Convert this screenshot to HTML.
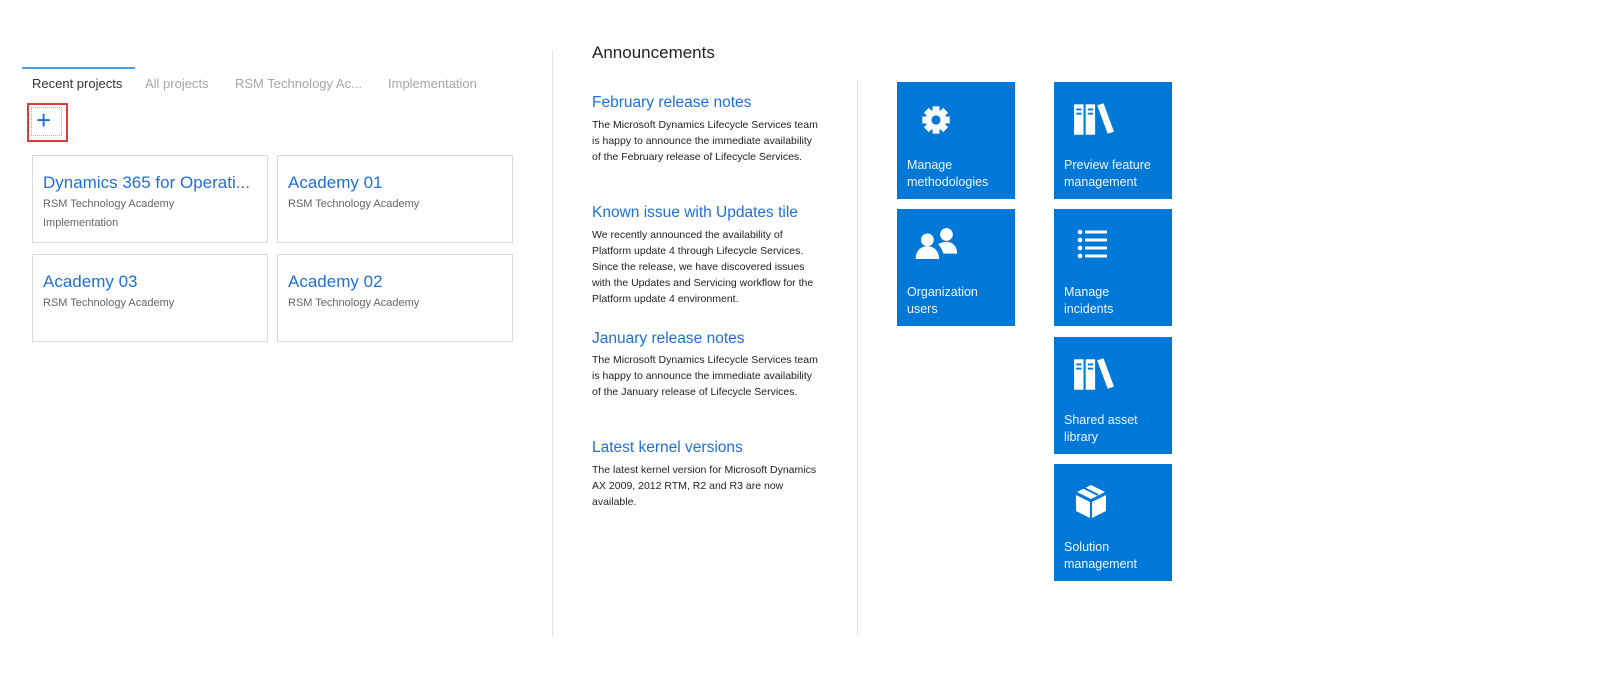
<!DOCTYPE html>
<html><head><style>
body{margin:0;width:1600px;height:677px;background:#fff;font-family:"Liberation Sans",sans-serif;position:relative;overflow:hidden}
.a{position:absolute}
.tab{position:absolute;top:76px;font-size:13px;color:#a6a6a6}
.card{position:absolute;width:234px;height:86px;border:1px solid #d9d9d9}
.card .t{position:absolute;left:10px;top:17px;font-size:17px;color:#1e6fd9;white-space:nowrap}
.card .s{position:absolute;left:10px;font-size:11px;color:#666}
.h{position:absolute;left:592px;font-size:15.5px;color:#1e6fd9}
.p{position:absolute;left:592px;width:229px;font-size:10.5px;line-height:16px;color:#222}
.tile{position:absolute;width:118px;height:117px;background:#0078d7;color:#fff}
.tile .l{position:absolute;left:10px;top:75px;font-size:12.5px;line-height:17px;color:#f0f6fc}
.tile svg{position:absolute}
</style></head><body>
<div class="a" style="left:22px;top:67px;width:113px;height:2px;background:#4a9be0"></div>
<div class="tab" style="left:32px;color:#333">Recent projects</div>
<div class="tab" style="left:145px">All projects</div>
<div class="tab" style="left:235px">RSM Technology Ac...</div>
<div class="tab" style="left:388px">Implementation</div>
<div class="a" style="left:27px;top:103px;width:37px;height:35px;border:2px solid #e03c3c"></div>
<div class="a" style="left:31px;top:107px;width:29px;height:27px;border:1px dotted #aaa"></div>
<div class="a" style="left:36px;top:104px;font-size:26px;color:#1e6fd9;line-height:32px">+</div>
<div class="card" style="left:32px;top:155px"><div class="t">Dynamics 365 for Operati...</div><div class="s" style="top:42px">RSM Technology Academy</div><div class="s" style="top:61px">Implementation</div></div>
<div class="card" style="left:277px;top:155px"><div class="t">Academy 01</div><div class="s" style="top:42px">RSM Technology Academy</div></div>
<div class="card" style="left:32px;top:254px"><div class="t">Academy 03</div><div class="s" style="top:42px">RSM Technology Academy</div></div>
<div class="card" style="left:277px;top:254px"><div class="t">Academy 02</div><div class="s" style="top:42px">RSM Technology Academy</div></div>
<div class="a" style="left:552px;top:50px;width:1px;height:586px;background:#e3e3e3"></div>
<div class="a" style="left:857px;top:80px;width:1px;height:556px;background:#e3e3e3"></div>
<div class="a" style="left:592px;top:43px;font-size:17px;color:#222">Announcements</div>
<div class="h" style="top:94px">February release notes</div>
<div class="p" style="top:117px">The Microsoft Dynamics Lifecycle Services team is happy to announce the immediate availability of the February release of Lifecycle Services.</div>
<div class="h" style="top:204px">Known issue with Updates tile</div>
<div class="p" style="top:227px">We recently announced the availability of Platform update 4 through Lifecycle Services. Since the release, we have discovered issues with the Updates and Servicing workflow for the Platform update 4 environment.</div>
<div class="h" style="top:330px">January release notes</div>
<div class="p" style="top:352px">The Microsoft Dynamics Lifecycle Services team is happy to announce the immediate availability of the January release of Lifecycle Services.</div>
<div class="h" style="top:439px">Latest kernel versions</div>
<div class="p" style="top:462px">The latest kernel version for Microsoft Dynamics AX 2009, 2012 RTM, R2 and R3 are now available.</div>

<div class="tile" style="left:897px;top:82px"><svg width="32" height="32" viewBox="4 2 28 28" style="left:23px;top:22px"><g fill="#fff"><circle cx="18" cy="16" r="9"/><rect x="15" y="4" width="6" height="24"/><rect x="6" y="13" width="24" height="6"/><rect x="15" y="4" width="6" height="24" transform="rotate(45 18 16)"/><rect x="15" y="4" width="6" height="24" transform="rotate(-45 18 16)"/></g><circle cx="18" cy="16" r="4" fill="#0078d7"/></svg><div class="l">Manage<br>methodologies</div></div>
<div class="tile" style="left:897px;top:209px"><svg width="48" height="34" viewBox="0 0 44 32" style="left:17px;top:17px"><g fill="#fff"><circle cx="12" cy="13" r="6"/><path d="M1 31c0-8 5-12 11-12s11 4 11 12z"/><circle cx="30" cy="8" r="6"/><path d="M22 17c2-1 5-2 8-2 6 0 10 4 10 11h-13c-1-4-3-7-5-9z"/></g></svg><div class="l">Organization<br>users</div></div>
<div class="tile" style="left:1054px;top:82px"><svg width="42" height="36" viewBox="0 0 40 34" style="left:18px;top:19px"><g fill="#fff"><rect x="2" y="3" width="9" height="29"/><rect x="13" y="3" width="9" height="29"/><path d="M24 4l6-2 10 27-6 2z"/></g><g fill="#0078d7"><rect x="4" y="7" width="5" height="1.8"/><rect x="4" y="11" width="5" height="1.8"/><rect x="15" y="7" width="5" height="1.8"/><rect x="15" y="11" width="5" height="1.8"/></g></svg><div class="l">Preview feature<br>management</div></div>
<div class="tile" style="left:1054px;top:209px"><svg width="32" height="32" viewBox="0 0 32 32" style="left:23px;top:20px"><g fill="#fff"><circle cx="3" cy="3" r="2.3"/><circle cx="3" cy="11" r="2.3"/><circle cx="3" cy="19" r="2.3"/><circle cx="3" cy="27" r="2.3"/><rect x="8" y="1.5" width="22" height="3"/><rect x="8" y="9.5" width="22" height="3"/><rect x="8" y="17.5" width="22" height="3"/><rect x="8" y="25.5" width="22" height="3"/></g></svg><div class="l">Manage<br>incidents</div></div>
<div class="tile" style="left:1054px;top:337px"><svg width="42" height="36" viewBox="0 0 40 34" style="left:18px;top:19px"><g fill="#fff"><rect x="2" y="3" width="9" height="29"/><rect x="13" y="3" width="9" height="29"/><path d="M24 4l6-2 10 27-6 2z"/></g><g fill="#0078d7"><rect x="4" y="7" width="5" height="1.8"/><rect x="4" y="11" width="5" height="1.8"/><rect x="15" y="7" width="5" height="1.8"/><rect x="15" y="11" width="5" height="1.8"/></g></svg><div class="l">Shared asset<br>library</div></div>
<div class="tile" style="left:1054px;top:464px"><svg width="36" height="36" viewBox="0 0 36 36" style="left:19px;top:19px"><g fill="#fff"><path d="M4 9l14-7 14 7-14 7z"/><path d="M3 12l14 7v16L3 28z"/><path d="M33 12l-14 7v16l14-7z"/></g><path d="M11 5l14 7" stroke="#0078d7" stroke-width="2"/></svg><div class="l">Solution<br>management</div></div>
</body></html>
